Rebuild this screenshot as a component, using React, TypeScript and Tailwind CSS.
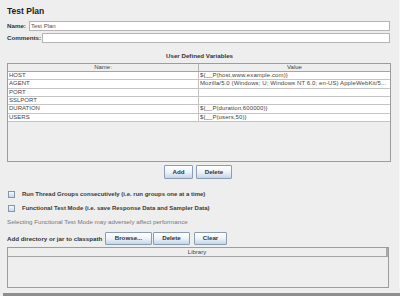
import React from 'react';

const variables: [string, string][] = [
    ['HOST', '${__P(host,www.example.com)}'],
    ['AGENT', 'Mozilla/5.0 (Windows; U; Windows NT 6.0; en-US) AppleWebKit/5...'],
    ['PORT', ''],
    ['SSLPORT', ''],
    ['DURATION', '${__P(duration,600000)}'],
    ['USERS', '${__P(users,50)}'],
];

const Btn: React.FC<{ label: string; width: string }> = ({ label, width }) => (
    <button
        className={`${width} h-full border border-[#8b9db1] rounded-[1px] bg-linear-to-b from-white via-[#eef3f9] to-[#c3d5e9] text-[6.2px] font-bold text-[#333] leading-none`}
    >
        {label}
    </button>
);

const Check: React.FC<{ label: string }> = ({ label }) => (
    <div className="flex items-center h-full">
        <div className="ml-[1px] w-[7px] h-[7px] border border-[#8496aa] bg-linear-to-b from-[#f6f9fc] to-[#cbd9e8]" />
        <span className="ml-[7px] text-[6px] font-bold text-[#3a3a3a]">{label}</span>
    </div>
);

export default function App() {
    return (
        <div className="w-[400px] h-[296px] bg-[#eeeeee] font-['Liberation_Sans',Arial,sans-serif] text-[#333] overflow-hidden flex flex-col">
            <div className="flex-1 flex flex-col pl-[7px] pr-[9px] border-r border-[#f8f8f8]">
                {/* Title */}
                <div className="h-[21px] pt-[6px] text-[8.5px] font-bold leading-[10px] text-[#222]">
                    Test Plan
                </div>

                {/* Name / Comments */}
                <div className="flex items-center h-[10px]">
                    <span className="w-[22px] text-[6.2px] font-bold">Name:</span>
                    <div className="flex-1 h-full bg-white border border-[#b4b4b4] pl-[1px] text-[6px] leading-[8px] text-[#555]">
                        Test Plan
                    </div>
                </div>
                <div className="flex items-center h-[10px] mt-[2px]">
                    <span className="w-[35px] text-[6.2px] font-bold">Comments:</span>
                    <div className="flex-1 h-full bg-white border border-[#b4b4b4]" />
                </div>

                {/* User Defined Variables */}
                <div className="h-[20px] flex items-end justify-center pb-[3px] pl-[2px]">
                    <span className="text-[6.2px] font-bold leading-[8px]">User Defined Variables</span>
                </div>
                <div className="h-[99px] -mr-[1px] border border-[#9c9c9c] flex flex-col text-[6px] leading-[8px]">
                    <div className="flex h-[8px] border-b border-[#a4a4a4] text-[#444]">
                        <div className="w-[191px] text-center border-r border-[#b4b4b4] leading-[7px]">Name:</div>
                        <div className="flex-1 text-center leading-[7px]">Value</div>
                    </div>
                    {variables.map(([name, value]) => (
                        <div key={name} className="flex h-[8.33px] bg-white border-b border-[#c4c4c4] text-[#444]">
                            <div className="w-[191px] pl-[1px] border-r border-[#c4c4c4] leading-[7.5px]">{name}</div>
                            <div className="flex-1 pl-[1px] overflow-hidden whitespace-nowrap leading-[7.5px] tracking-[0.1px]">{value}</div>
                        </div>
                    ))}
                </div>

                {/* Add / Delete */}
                <div className="h-[14px] mt-[3px] flex justify-center gap-[3px] pr-[1px]">
                    <Btn label="Add" width="w-[29px]" />
                    <Btn label="Delete" width="w-[36px]" />
                </div>

                {/* Options */}
                <div className="h-[12px] mt-[9px]">
                    <Check label="Run Thread Groups consecutively (i.e. run groups one at a time)" />
                </div>
                <div className="h-[13px] mt-[2px]">
                    <Check label="Functional Test Mode (i.e. save Response Data and Sampler Data)" />
                </div>
                <div className="h-[12px] mt-[1px] flex items-center text-[6.2px] text-[#777]">
                    Selecting Functional Test Mode may adversely affect performance
                </div>

                {/* Classpath */}
                <div className="h-[13px] mt-[4px] flex items-center">
                    <span className="w-[98px] text-[6.2px] font-bold">Add directory or jar to classpath</span>
                    <div className="flex h-full gap-[1px]">
                        <Btn label="Browse..." width="w-[47px]" />
                        <Btn label="Delete" width="w-[37px]" />
                        <div className="w-[2px]" />
                        <Btn label="Clear" width="w-[33px]" />
                    </div>
                </div>
                <div className="h-[41px] mt-[2px] mr-[1px] border border-[#9c9c9c] flex flex-col">
                    <div className="h-[9px] border-b border-[#a4a4a4] border-r-2 border-r-[#a8a8a8] text-center text-[6px] leading-[8px] text-[#444]">
                        Library
                    </div>
                </div>
            </div>
            <div className="h-[3px] ml-[3px] mt-[5px] bg-[#8e8e8e]" />
        </div>
    );
}
